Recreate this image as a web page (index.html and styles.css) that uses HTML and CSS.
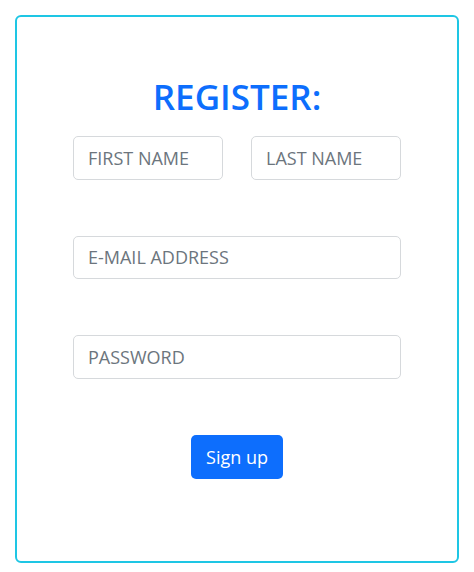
FILE: index.html
```html
<!DOCTYPE html>
<html>
<head>
<meta charset="utf-8">
<link rel="stylesheet" href="styles.css">
</head>
<body>
<div class="page">
  <div class="card">
    <h1 class="title">REGISTER:</h1>
    <form class="form">
      <div class="row">
        <input class="field" type="text" placeholder="FIRST NAME">
        <input class="field" type="text" placeholder="LAST NAME">
      </div>
      <input class="field" type="email" placeholder="E-MAIL ADDRESS">
      <input class="field" type="password" placeholder="PASSWORD">
      <div class="actions">
        <button class="btn" type="button">Sign up</button>
      </div>
    </form>
  </div>
</div>
</body>
</html>
```
FILE: styles.css
```css
* { box-sizing: border-box; }
html, body { margin: 0; padding: 0; background: #fff; }
body { font-family: "Open Sans", "Noto Sans", sans-serif; }
.page { padding: 15px 15px 9px 15px; }
.card {
  width: 444px;
  height: 548px;
  border: 2px solid #1ec6e4;
  border-radius: 6px;
  display: flex;
  flex-direction: column;
  align-items: center;
  padding-top: 60px;
}
.title {
  margin: 0 0 19px 0;
  font-size: 35px;
  font-weight: 600;
  line-height: 40px;
  color: #0d6efd;
}
.form {
  width: 328px;
  display: flex;
  flex-direction: column;
  gap: 56px;
}
.row {
  display: flex;
  justify-content: space-between;
}
.row .field { width: 150px; }
.field {
  height: 43.5px;
  width: 100%;
  border: 1px solid #d6d9dc;
  border-radius: 5px;
  padding: 0 14px;
  font-family: inherit;
  font-size: 18px;
  color: #212529;
  background: #fff;
  outline: none;
}
.field::placeholder { color: #6c757d; opacity: 1; }
.actions { display: flex; justify-content: center; }
.btn {
  height: 44px;
  width: 92px;
  border: none;
  border-radius: 5px;
  background: #0d6efd;
  color: #fff;
  font-family: inherit;
  font-size: 18px;
  padding: 0;
  cursor: pointer;
}
```
